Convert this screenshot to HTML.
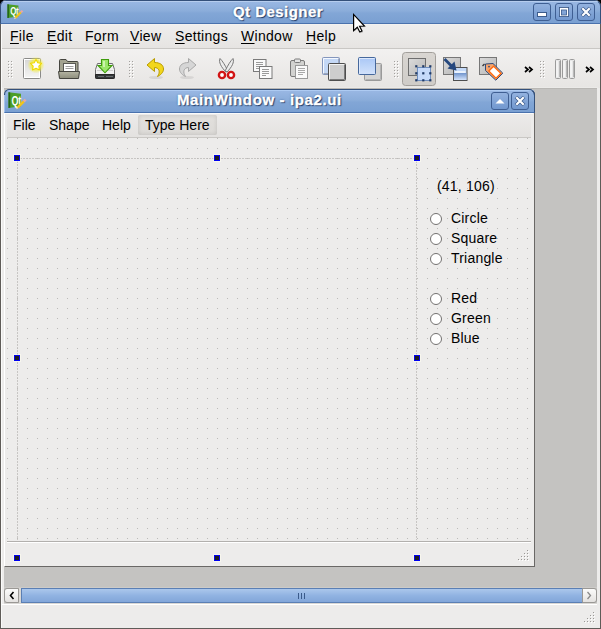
<!DOCTYPE html>
<html><head><meta charset="utf-8">
<style>
*{margin:0;padding:0;box-sizing:border-box}
html,body{width:601px;height:629px;overflow:hidden;background:#000;font-family:"Liberation Sans",sans-serif;position:relative}
.a{position:absolute}
.t{position:absolute;white-space:nowrap;color:#000;font-size:14px;line-height:14px}
.u{text-decoration:underline;text-underline-offset:2px;text-decoration-thickness:1px}
.hd{position:absolute;width:6px;height:6px;background:#1e1e22;border:1px solid #0000f0;box-shadow:0 0 0 1px rgba(255,255,240,0.55)}
.rb{position:absolute;left:430px;width:12px;height:12px;border-radius:50%;background:#fff;border:1px solid #737170}
.rt{position:absolute;left:451px;white-space:nowrap;font-size:14px;line-height:14px;color:#000;letter-spacing:0.2px}
.tbar{background:linear-gradient(#9ab8e4,#8badda 45%,#82a6d6 55%,#7aa0d2)}
.tb{border:1px solid #3f5f93;border-radius:3px;background:linear-gradient(#93b2df,#7298cf)}
.ttl{position:absolute;white-space:nowrap;font-weight:bold;color:#fff;font-size:15px;line-height:15px;text-shadow:1px 1px 1px #1c3866,0 0 2px #35578c;-webkit-text-stroke:0.3px #fff}
</style></head><body>
<!-- window frame -->
<div class="a" style="left:0;top:0;width:601px;height:629px;background:#edeceb;border-radius:6px 6px 0 0;border-left:1px solid #5f5c58;border-right:1px solid #5f5c58;border-bottom:1px solid #5f5c58"></div>
<!-- outer title bar -->
<div class="a tbar" style="left:0;top:0;width:601px;height:24px;border-radius:6px 6px 0 0;border:1px solid #34507a;border-bottom:1px solid #4a72ad"></div>
<div class="a" style="left:1px;top:1px;width:599px;height:1px;background:#b6cdee;border-radius:6px 6px 0 0;left:3px;width:595px"></div>
<div class="a" style="left:1px;top:24px;width:599px;height:1px;background:#f3f2f0"></div>
<svg class="a" style="left:7px;top:4px;transform:scale(0.88);transform-origin:0 0" width="20" height="18">
<path d="M0.5 0.3 L13 1.8 L13 14.2 L0.5 16 Z" fill="#4c9e28"/>
<path d="M0.5 0.3 L2.2 0.6 L2.2 15.6 L0.5 16 Z" fill="#226418"/>
<text x="0" y="0" transform="translate(3.6,12.6) scale(0.78,1.05)" font-family="Liberation Sans" font-size="11.5" font-weight="bold" fill="#fff" stroke="none" letter-spacing="-0.4">Qt</text>
<path d="M9.6 15.6 L15.8 9.4" stroke="#f2c41c" stroke-width="2.6"/>
<path d="M15.8 9.4 L17.6 7.6" stroke="#eaa7a2" stroke-width="2.6"/>
<path d="M8.4 16.8 L9.6 15.6" stroke="#e8d8b0" stroke-width="1.6"/>
</svg>
<div class="ttl" style="left:233px;top:4px;letter-spacing:0.45px">Qt Designer</div>
<div class="a tb" style="left:533px;top:3px;width:18px;height:18px"></div><div class="a tb" style="left:555px;top:3px;width:18px;height:18px"></div><div class="a tb" style="left:577px;top:3px;width:18px;height:18px"></div>
<svg class="a" style="left:533px;top:3px" width="18" height="18"><rect x="4.5" y="9.5" width="9" height="4" fill="#fff" stroke="#3d5c8c"/></svg>
<svg class="a" style="left:555px;top:3px" width="18" height="18"><rect x="4.5" y="4.5" width="9" height="9" fill="none" stroke="#3d5c8c"/><rect x="5.5" y="5.5" width="7" height="7" fill="none" stroke="#fff" stroke-width="1.2"/><path d="M5.5 6.2 H12.5" stroke="#fff" stroke-width="1.4"/><rect x="6.5" y="7" width="5" height="5" fill="none" stroke="#3d5c8c" stroke-width="0.8"/></svg>
<svg class="a" style="left:577px;top:3px" width="18" height="18"><path d="M5 5 L13 13 M13 5 L5 13" stroke="#3d5c8c" stroke-width="3.8"/><path d="M5.3 5.3 L12.7 12.7 M12.7 5.3 L5.3 12.7" stroke="#fff" stroke-width="2.2"/></svg>

<!-- menubar -->
<div class="a" style="left:1px;top:25px;width:599px;height:23px;background:linear-gradient(#efeeed,#e6e4e2)"></div>
<div class="a" style="left:1px;top:48px;width:599px;height:1px;background:#c9c7c4"></div>
<div class="t" style="left:10px;top:29px;letter-spacing:0.3px"><span class="u">F</span>ile</div>
<div class="t" style="left:47px;top:29px;letter-spacing:0.3px"><span class="u">E</span>dit</div>
<div class="t" style="left:85px;top:29px;letter-spacing:0.3px">F<span class="u">o</span>rm</div>
<div class="t" style="left:130px;top:29px;letter-spacing:0.3px"><span class="u">V</span>iew</div>
<div class="t" style="left:175px;top:29px;letter-spacing:0.3px"><span class="u">S</span>ettings</div>
<div class="t" style="left:241px;top:29px;letter-spacing:0.3px"><span class="u">W</span>indow</div>
<div class="t" style="left:306px;top:29px;letter-spacing:0.3px"><span class="u">H</span>elp</div>

<!-- toolbar -->
<div class="a" style="left:1px;top:49px;width:599px;height:39px;background:linear-gradient(#f2f1f0,#e7e5e3)"></div>

<!-- MDI area -->
<div class="a" style="left:2px;top:87px;width:596px;height:1px;background:#ebeae8"></div>
<div class="a" style="left:4px;top:88px;width:593px;height:515px;background:#c4c3c1;border-top:1px solid #b9b7b4"></div>

<!-- subwindow -->
<div class="a" style="left:4px;top:100px;width:531px;height:467px;background:#edeceb;border-left:1px solid #fff;border-right:1px solid #6a6866;border-bottom:1px solid #6a6866"></div>
<div class="a tbar" style="left:4px;top:89px;width:531px;height:24px;border-radius:6px 6px 0 0;border:1px solid #34507a;border-bottom-color:#4a72ad;border-left-color:#a6c3ec"></div>
<div class="a" style="left:5px;top:90px;width:529px;height:1px;background:#aecbf2;border-radius:4px 4px 0 0"></div>
<svg class="a" style="left:0;top:85px" width="16" height="16"><path d="M4.5 10 Q4.5 4.5 10 4.5" fill="none" stroke="#34507a" stroke-width="1.1"/></svg><svg class="a" style="left:524px;top:85px" width="16" height="16"><path d="M4.5 4.5 Q10.5 4.5 10.5 10.5" fill="none" stroke="#34507a" stroke-width="1.1"/></svg>
<div class="a" style="left:5px;top:113px;width:528px;height:1px;background:#fbfbfa"></div>
<svg class="a" style="left:8px;top:92px;transform:scale(1.0);transform-origin:0 0" width="20" height="18">
<path d="M0.5 0.3 L13 1.8 L13 14.2 L0.5 16 Z" fill="#4c9e28"/>
<path d="M0.5 0.3 L2.2 0.6 L2.2 15.6 L0.5 16 Z" fill="#226418"/>
<text x="0" y="0" transform="translate(3.6,12.6) scale(0.78,1.05)" font-family="Liberation Sans" font-size="11.5" font-weight="bold" fill="#fff" stroke="none" letter-spacing="-0.4">Qt</text>
<path d="M9.6 15.6 L15.8 9.4" stroke="#f2c41c" stroke-width="2.6"/>
<path d="M15.8 9.4 L17.6 7.6" stroke="#eaa7a2" stroke-width="2.6"/>
<path d="M8.4 16.8 L9.6 15.6" stroke="#e8d8b0" stroke-width="1.6"/>
</svg>
<div class="ttl" style="left:177px;top:92px;letter-spacing:0.62px">MainWindow - ipa2.ui</div>
<div class="a tb" style="left:491px;top:92px;width:18px;height:18px"></div><div class="a tb" style="left:511px;top:92px;width:18px;height:18px"></div>
<svg class="a" style="left:491px;top:92px" width="18" height="18"><path d="M4.5 11.5 L9 7 L13.5 11.5 Z" fill="#fff"/></svg>
<svg class="a" style="left:511px;top:92px" width="18" height="18"><path d="M5 5 L13 13 M13 5 L5 13" stroke="#3d5c8c" stroke-width="3.6"/><path d="M5.3 5.3 L12.7 12.7 M12.7 5.3 L5.3 12.7" stroke="#fff" stroke-width="2.2"/></svg>

<!-- sub menubar -->
<div class="a" style="left:7px;top:114px;width:524px;height:23px;background:linear-gradient(#ecebea,#e4e2e0)"></div>
<div class="a" style="left:7px;top:137px;width:524px;height:1px;background:#c9c7c4"></div>
<div class="a" style="left:138px;top:115px;width:79px;height:20px;background:linear-gradient(#e2e0dd,#dcdad7);box-shadow:inset 0 0 4px rgba(0,0,0,0.13);border-radius:2px"></div>
<div class="t" style="left:13px;top:118px">File</div>
<div class="t" style="left:49px;top:118px">Shape</div>
<div class="t" style="left:102px;top:118px">Help</div>
<div class="t" style="left:145px;top:118px">Type Here</div>

<!-- status line of subwindow -->
<div class="a" style="left:7px;top:541px;width:524px;height:1px;background:#b2b0ad"></div>
<div class="a" style="left:7px;top:542px;width:524px;height:1px;background:#fff"></div>

<svg class="a" style="left:0;top:0" width="601" height="629">
<defs>
<pattern id="grid" x="7" y="138" width="10" height="10" patternUnits="userSpaceOnUse"><rect width="1" height="1" fill="#bcbab8"/></pattern>
<linearGradient id="docg" x1="0" y1="0" x2="0" y2="1"><stop offset="0" stop-color="#d8d8d6"/><stop offset="1" stop-color="#f4f4f3"/></linearGradient>
<radialGradient id="glow"><stop offset="0.5" stop-color="#f4ee40" stop-opacity="0.9"/><stop offset="1" stop-color="#f4ee40" stop-opacity="0"/></radialGradient>
<linearGradient id="foldg" x1="0" y1="0" x2="0" y2="1"><stop offset="0" stop-color="#b4b4a2"/><stop offset="1" stop-color="#8e8e7c"/></linearGradient>
<linearGradient id="grayg" x1="0" y1="0" x2="1" y2="1"><stop offset="0" stop-color="#dcdcdc"/><stop offset="1" stop-color="#b4b4b4"/></linearGradient>
<linearGradient id="blueg" x1="0" y1="0" x2="0" y2="1"><stop offset="0" stop-color="#a9c7f6"/><stop offset="1" stop-color="#d2e2fb"/></linearGradient>
<linearGradient id="pressg" x1="0" y1="0" x2="0" y2="1"><stop offset="0" stop-color="#d9d6d2"/><stop offset="1" stop-color="#cfccc8"/></linearGradient>
</defs>
<path d="M20 158.5 H414 M17.5 161 V540 M416.5 161 V540" stroke="#c8c6c4" stroke-width="1" stroke-dasharray="2 1"/>
<rect x="7" y="138" width="521" height="401" fill="url(#grid)"/>

<rect x="9" y="62" width="1" height="1" fill="#fff"/><rect x="8" y="61" width="1" height="1" fill="#a3a19e"/>
<rect x="12" y="62" width="1" height="1" fill="#fff"/><rect x="11" y="61" width="1" height="1" fill="#a3a19e"/>
<rect x="9" y="65" width="1" height="1" fill="#fff"/><rect x="8" y="64" width="1" height="1" fill="#a3a19e"/>
<rect x="12" y="65" width="1" height="1" fill="#fff"/><rect x="11" y="64" width="1" height="1" fill="#a3a19e"/>
<rect x="9" y="68" width="1" height="1" fill="#fff"/><rect x="8" y="67" width="1" height="1" fill="#a3a19e"/>
<rect x="12" y="68" width="1" height="1" fill="#fff"/><rect x="11" y="67" width="1" height="1" fill="#a3a19e"/>
<rect x="9" y="71" width="1" height="1" fill="#fff"/><rect x="8" y="70" width="1" height="1" fill="#a3a19e"/>
<rect x="12" y="71" width="1" height="1" fill="#fff"/><rect x="11" y="70" width="1" height="1" fill="#a3a19e"/>
<rect x="9" y="74" width="1" height="1" fill="#fff"/><rect x="8" y="73" width="1" height="1" fill="#a3a19e"/>
<rect x="12" y="74" width="1" height="1" fill="#fff"/><rect x="11" y="73" width="1" height="1" fill="#a3a19e"/>
<rect x="9" y="77" width="1" height="1" fill="#fff"/><rect x="8" y="76" width="1" height="1" fill="#a3a19e"/>
<rect x="12" y="77" width="1" height="1" fill="#fff"/><rect x="11" y="76" width="1" height="1" fill="#a3a19e"/>
<rect x="130" y="62" width="1" height="1" fill="#fff"/><rect x="129" y="61" width="1" height="1" fill="#a3a19e"/>
<rect x="133" y="62" width="1" height="1" fill="#fff"/><rect x="132" y="61" width="1" height="1" fill="#a3a19e"/>
<rect x="130" y="65" width="1" height="1" fill="#fff"/><rect x="129" y="64" width="1" height="1" fill="#a3a19e"/>
<rect x="133" y="65" width="1" height="1" fill="#fff"/><rect x="132" y="64" width="1" height="1" fill="#a3a19e"/>
<rect x="130" y="68" width="1" height="1" fill="#fff"/><rect x="129" y="67" width="1" height="1" fill="#a3a19e"/>
<rect x="133" y="68" width="1" height="1" fill="#fff"/><rect x="132" y="67" width="1" height="1" fill="#a3a19e"/>
<rect x="130" y="71" width="1" height="1" fill="#fff"/><rect x="129" y="70" width="1" height="1" fill="#a3a19e"/>
<rect x="133" y="71" width="1" height="1" fill="#fff"/><rect x="132" y="70" width="1" height="1" fill="#a3a19e"/>
<rect x="130" y="74" width="1" height="1" fill="#fff"/><rect x="129" y="73" width="1" height="1" fill="#a3a19e"/>
<rect x="133" y="74" width="1" height="1" fill="#fff"/><rect x="132" y="73" width="1" height="1" fill="#a3a19e"/>
<rect x="130" y="77" width="1" height="1" fill="#fff"/><rect x="129" y="76" width="1" height="1" fill="#a3a19e"/>
<rect x="133" y="77" width="1" height="1" fill="#fff"/><rect x="132" y="76" width="1" height="1" fill="#a3a19e"/>
<rect x="395" y="62" width="1" height="1" fill="#fff"/><rect x="394" y="61" width="1" height="1" fill="#a3a19e"/>
<rect x="398" y="62" width="1" height="1" fill="#fff"/><rect x="397" y="61" width="1" height="1" fill="#a3a19e"/>
<rect x="395" y="65" width="1" height="1" fill="#fff"/><rect x="394" y="64" width="1" height="1" fill="#a3a19e"/>
<rect x="398" y="65" width="1" height="1" fill="#fff"/><rect x="397" y="64" width="1" height="1" fill="#a3a19e"/>
<rect x="395" y="68" width="1" height="1" fill="#fff"/><rect x="394" y="67" width="1" height="1" fill="#a3a19e"/>
<rect x="398" y="68" width="1" height="1" fill="#fff"/><rect x="397" y="67" width="1" height="1" fill="#a3a19e"/>
<rect x="395" y="71" width="1" height="1" fill="#fff"/><rect x="394" y="70" width="1" height="1" fill="#a3a19e"/>
<rect x="398" y="71" width="1" height="1" fill="#fff"/><rect x="397" y="70" width="1" height="1" fill="#a3a19e"/>
<rect x="395" y="74" width="1" height="1" fill="#fff"/><rect x="394" y="73" width="1" height="1" fill="#a3a19e"/>
<rect x="398" y="74" width="1" height="1" fill="#fff"/><rect x="397" y="73" width="1" height="1" fill="#a3a19e"/>
<rect x="395" y="77" width="1" height="1" fill="#fff"/><rect x="394" y="76" width="1" height="1" fill="#a3a19e"/>
<rect x="398" y="77" width="1" height="1" fill="#fff"/><rect x="397" y="76" width="1" height="1" fill="#a3a19e"/>
<rect x="541" y="62" width="1" height="1" fill="#fff"/><rect x="540" y="61" width="1" height="1" fill="#a3a19e"/>
<rect x="544" y="62" width="1" height="1" fill="#fff"/><rect x="543" y="61" width="1" height="1" fill="#a3a19e"/>
<rect x="541" y="65" width="1" height="1" fill="#fff"/><rect x="540" y="64" width="1" height="1" fill="#a3a19e"/>
<rect x="544" y="65" width="1" height="1" fill="#fff"/><rect x="543" y="64" width="1" height="1" fill="#a3a19e"/>
<rect x="541" y="68" width="1" height="1" fill="#fff"/><rect x="540" y="67" width="1" height="1" fill="#a3a19e"/>
<rect x="544" y="68" width="1" height="1" fill="#fff"/><rect x="543" y="67" width="1" height="1" fill="#a3a19e"/>
<rect x="541" y="71" width="1" height="1" fill="#fff"/><rect x="540" y="70" width="1" height="1" fill="#a3a19e"/>
<rect x="544" y="71" width="1" height="1" fill="#fff"/><rect x="543" y="70" width="1" height="1" fill="#a3a19e"/>
<rect x="541" y="74" width="1" height="1" fill="#fff"/><rect x="540" y="73" width="1" height="1" fill="#a3a19e"/>
<rect x="544" y="74" width="1" height="1" fill="#fff"/><rect x="543" y="73" width="1" height="1" fill="#a3a19e"/>
<rect x="541" y="77" width="1" height="1" fill="#fff"/><rect x="540" y="76" width="1" height="1" fill="#a3a19e"/>
<rect x="544" y="77" width="1" height="1" fill="#fff"/><rect x="543" y="76" width="1" height="1" fill="#a3a19e"/>
<rect x="23.5" y="58.5" width="17" height="20" rx="1" fill="#fff" stroke="#8a8a88"/>
<rect x="25" y="60" width="14" height="17" fill="url(#docg)"/>
<circle cx="36" cy="65" r="8.5" fill="url(#glow)"/>
<polygon points="36.00,59.40 37.76,62.77 41.52,63.41 38.85,66.13 39.41,69.89 36.00,68.20 32.59,69.89 33.15,66.13 30.48,63.41 34.24,62.77" fill="#fff" stroke="#f0d800" stroke-width="1.1" stroke-linejoin="round"/>
<path d="M59.5 77.5 V60.5 Q59.5 59.5 60.5 59.5 H66 L67.5 61.5 H77 Q78 61.5 78 62.5 V77.5 Z" fill="#a2a290" stroke="#45453f"/>
<rect x="63.5" y="63.5" width="12" height="9" fill="#fff" stroke="#5a5a55"/>
<path d="M65.5 66.5 H73.5 M65.5 68.5 H73.5" stroke="#a0a0a0"/>
<path d="M58.5 71.5 H79.5 L78.5 78.5 H59.5 Z" fill="url(#foldg)" stroke="#45453f"/>
<path d="M97.5 63.5 H112.5 L114.5 69.5 V77.5 Q114.5 78.5 113.5 78.5 H96.5 Q95.5 78.5 95.5 77.5 V69.5 Z" fill="#f0f0f0" stroke="#6e6e6e"/><path d="M97 70.5 H113" stroke="#d0d0d0"/>
<path d="M95.5 74.5 H114.5 V77.5 Q114.5 78.5 113.5 78.5 H96.5 Q95.5 78.5 95.5 77.5 Z" fill="#34383a" stroke="#262626"/>
<path d="M98 76.5 H104 M106 76.5 H113" stroke="#6a6e70" stroke-width="1"/>
<path d="M101.5 59.5 H108.5 V65.5 H112 L105 72.8 L98 65.5 H101.5 Z" fill="#9be66a" stroke="#3f9c0c" stroke-width="1.1"/><path d="M104 61 V67" stroke="#d8f8c0" stroke-width="1.6"/>
<ellipse cx="156" cy="77.5" rx="7" ry="1.6" fill="#000" opacity="0.08"/>
<path d="M147 65 L154.5 58.5 V62.5 C160 62.5 163.5 65 163.5 69 C163.5 72.5 160.5 75 157.5 76.5 C159 74 159.5 72.5 159 70.5 C158.5 68.5 156.5 67.5 154.5 67.5 V71.5 Z" fill="#f2d61c" stroke="#b89c00" stroke-linejoin="round"/>
<ellipse cx="187" cy="77.5" rx="7" ry="1.6" fill="#000" opacity="0.08"/>
<path d="M147 65 L154.5 58.5 V62.5 C160 62.5 163.5 65 163.5 69 C163.5 72.5 160.5 75 157.5 76.5 C159 74 159.5 72.5 159 70.5 C158.5 68.5 156.5 67.5 154.5 67.5 V71.5 Z" transform="translate(343,0) scale(-1,1)" fill="#d6d6d6" stroke="#a8a8a8" stroke-linejoin="round"/>
<path d="M220 58.5 C218.5 62 221 67 226 72 L227.8 70.8 C225 65 222.5 61 220 58.5Z" fill="#ececec" stroke="#777"/>
<path d="M220 58.5 C218.5 62 221 67 226 72 L227.8 70.8 C225 65 222.5 61 220 58.5Z" transform="translate(453,0) scale(-1,1)" fill="#ececec" stroke="#777"/>
<circle cx="222" cy="75" r="3.1" fill="#fff" stroke="#d21414" stroke-width="2.4"/>
<circle cx="231" cy="75" r="3.1" fill="#fff" stroke="#d21414" stroke-width="2.4"/>
<rect x="253.5" y="59.5" width="12.5" height="12" fill="#fafafa" stroke="#7a7a7a"/>
<path d="M256.0 62.5 H263.0 M256.0 64.5 H263.0 M256.0 66.5 H263.0 M256.0 68.5 H260.0" stroke="#9a9a9a"/>
<rect x="259.5" y="66.5" width="12.5" height="12" fill="#fafafa" stroke="#7a7a7a"/>
<path d="M262.0 69.5 H269.0 M262.0 71.5 H269.0 M262.0 73.5 H269.0 M262.0 75.5 H266.0" stroke="#9a9a9a"/>
<rect x="290.5" y="60.5" width="14" height="16" rx="1.5" fill="#d2d2d0" stroke="#7a7a7a"/>
<rect x="294.5" y="59" width="6" height="3.5" rx="1" fill="#e4e4e4" stroke="#7a7a7a"/>
<rect x="295.5" y="65.5" width="12" height="13" fill="#fafafa" stroke="#9a9a9a"/>
<path d="M298 68.5 H305 M298 70.5 H305 M298 72.5 H305 M298 74.5 H303" stroke="#a8a8a8"/>
<rect x="322.5" y="57.5" width="17" height="17" rx="1" fill="#c4d8f6" stroke="#8496bc"/><path d="M323.5 73.5 V58.5 H338.5" fill="none" stroke="#f4f8ff"/><path d="M338.5 58.5 V73.5 H323.5" fill="none" stroke="#9fa8ba"/><rect x="328.5" y="63.5" width="17" height="17" rx="1" fill="#cdcdcd" stroke="#4e4e4e"/><path d="M329.5 79.5 V64.5 H344.5" fill="none" stroke="#f2f2f2"/><path d="M344.5 64.5 V79.5 H329.5" fill="none" stroke="#7a7a7a"/>
<rect x="364.5" y="63.5" width="17" height="17" rx="1" fill="#d4d4d4" stroke="#9a9a9a"/><path d="M380.5 64.5 V79.5 H365.5" fill="none" stroke="#b4b4b4"/><rect x="358.5" y="57.5" width="17" height="17" rx="1" fill="url(#blueg)" stroke="#46689c"/><path d="M359.5 73.5 V58.5 H374.5" fill="none" stroke="#dce8fc"/>
<rect x="402.5" y="52.5" width="33" height="33" rx="3" fill="url(#pressg)" stroke="#a29f9b"/>
<rect x="408.5" y="58.5" width="17" height="17" fill="url(#grayg)" stroke="#6e6e6e"/>
<rect x="417.5" y="67.5" width="13" height="13" fill="#c6dafa" stroke="#6f8fc0"/>
<rect x="415.2" y="65.2" width="2.2" height="2.2" fill="#203a66"/>
<rect x="422.2" y="65.2" width="2.2" height="2.2" fill="#203a66"/>
<rect x="429.2" y="65.2" width="2.2" height="2.2" fill="#203a66"/>
<rect x="415.2" y="72.2" width="2.2" height="2.2" fill="#203a66"/>
<rect x="429.2" y="72.2" width="2.2" height="2.2" fill="#203a66"/>
<rect x="415.2" y="79.2" width="2.2" height="2.2" fill="#203a66"/>
<rect x="422.2" y="79.2" width="2.2" height="2.2" fill="#203a66"/>
<rect x="429.2" y="79.2" width="2.2" height="2.2" fill="#203a66"/>
<rect x="422.2" y="72.2" width="2.2" height="2.2" fill="#203a66"/>
<rect x="443.5" y="57.5" width="17" height="17" fill="url(#grayg)" stroke="#777"/>
<defs><linearGradient id="bdg" x1="0" y1="0" x2="0" y2="1"><stop offset="0" stop-color="#6f93cc"/><stop offset="1" stop-color="#d4e4fc"/></linearGradient></defs><rect x="453.5" y="67.5" width="13.5" height="13" fill="#c4daf9" stroke="#4e4e4e"/><rect x="454" y="73" width="12.5" height="7" fill="url(#bdg)"/><path d="M455 72 H465.5" stroke="#fff" stroke-width="1.3"/><path d="M444.5 59 L452.5 67" stroke="#24477e" stroke-width="2.8"/><path d="M447.5 68.5 L456.5 70.5 L454.5 61.5 Z" fill="#24477e"/>
<rect x="479.5" y="57.5" width="17" height="17" fill="url(#grayg)" stroke="#777"/>
<path d="M482.5 66 L484.5 64" stroke="#333" stroke-width="1.2"/><path d="M485.5 64 L493 63.5 L502.8 73.2 L495.8 80.2 L485.5 70.5 Z" fill="#f6a46c" stroke="#2f4a7a" stroke-linejoin="round"/><path d="M488.8 71 L493.6 66.2 L500.8 73.4 L496 78.2 Z" fill="#fff" stroke="#ff6a10" stroke-width="1.3"/><circle cx="489" cy="66.6" r="0.9" fill="#2f4a7a"/>
<path d="M525 67 L528 69.5 L525 72 M529 67 L532 69.5 L529 72" fill="none" stroke="#000" stroke-width="1.7"/>
<path d="M586 67 L589 69.5 L586 72 M590 67 L593 69.5 L590 72" fill="none" stroke="#000" stroke-width="1.7"/>
<rect x="555.5" y="59.5" width="5" height="19" rx="1" fill="#e6e6e6" stroke="#9a9a9a"/>
<path d="M557.0 61 V77" stroke="#fff"/>
<path d="M559.5 61 V77" stroke="#b8b8b8"/>
<rect x="562.5" y="59.5" width="5" height="19" rx="1" fill="#e6e6e6" stroke="#9a9a9a"/>
<path d="M564.0 61 V77" stroke="#fff"/>
<path d="M566.5 61 V77" stroke="#b8b8b8"/>
<rect x="569.5" y="59.5" width="5" height="19" rx="1" fill="#e6e6e6" stroke="#9a9a9a"/>
<path d="M571.0 61 V77" stroke="#fff"/>
<path d="M573.5 61 V77" stroke="#b8b8b8"/>
</svg>

<!-- radios -->
<div class="t" style="left:437px;top:179px;letter-spacing:0.2px">(41, 106)</div>
<div class="rb" style="top:213px"></div><div class="rt" style="top:211px">Circle</div>
<div class="rb" style="top:233px"></div><div class="rt" style="top:231px">Square</div>
<div class="rb" style="top:253px"></div><div class="rt" style="top:251px">Triangle</div>
<div class="rb" style="top:293px"></div><div class="rt" style="top:291px">Red</div>
<div class="rb" style="top:313px"></div><div class="rt" style="top:311px">Green</div>
<div class="rb" style="top:333px"></div><div class="rt" style="top:331px">Blue</div>

<!-- handles -->
<div class="hd" style="left:14px;top:155px"></div>
<div class="hd" style="left:214px;top:155px"></div>
<div class="hd" style="left:414px;top:155px"></div>
<div class="hd" style="left:14px;top:355px"></div>
<div class="hd" style="left:414px;top:355px"></div>
<div class="hd" style="left:14px;top:555px"></div>
<div class="hd" style="left:214px;top:555px"></div>
<div class="hd" style="left:414px;top:555px"></div>

<!-- scrollbar -->
<div class="a" style="left:19px;top:588px;width:564px;height:15px;background:#d9d7d4"></div>
<div class="a" style="left:4px;top:588px;width:15px;height:15px;background:linear-gradient(#fbfbfa,#e4e2e0);border:1px solid #9a9895;border-radius:3px 0 0 3px"></div>
<svg class="a" style="left:4px;top:588px" width="15" height="15"><path d="M9.5 4 L6.5 7.5 L9.5 11" fill="none" stroke="#000" stroke-width="1.6"/></svg>
<div class="a" style="left:21px;top:588px;width:562px;height:15px;background:linear-gradient(#abc7ec,#91b3e2 50%,#82a6d9);border:1px solid #5b7fb4"></div>
<div class="a" style="left:298px;top:593px;width:1px;height:6px;background:#3a5a8a"></div>
<div class="a" style="left:301px;top:593px;width:1px;height:6px;background:#3a5a8a"></div>
<div class="a" style="left:304px;top:593px;width:1px;height:6px;background:#3a5a8a"></div>
<div class="a" style="left:582px;top:588px;width:15px;height:15px;background:linear-gradient(#fbfbfa,#e4e2e0);border:1px solid #9a9895;border-radius:0 3px 3px 0"></div>
<svg class="a" style="left:582px;top:588px" width="15" height="15"><path d="M5.5 4 L8.5 7.5 L5.5 11" fill="none" stroke="#8a8a8a" stroke-width="1.3"/></svg>

<!-- status -->
<div class="a" style="left:1px;top:25px;width:1px;height:603px;background:#fafaf9"></div>
<div class="a" style="left:4px;top:603px;width:593px;height:1px;background:#d9d7d4"></div><div class="a" style="left:4px;top:587px;width:593px;height:1px;background:#cdcbc8"></div>
<div class="a" style="left:2px;top:604px;width:595px;height:1px;background:#fff"></div>
<svg class="a" style="left:0;top:0" width="601" height="629">
<rect x="528" y="551" width="1" height="1" fill="#fff"/><rect x="527" y="550" width="1" height="1" fill="#9a9895"/><rect x="528" y="554" width="1" height="1" fill="#fff"/><rect x="527" y="553" width="1" height="1" fill="#9a9895"/><rect x="525" y="554" width="1" height="1" fill="#fff"/><rect x="524" y="553" width="1" height="1" fill="#9a9895"/><rect x="528" y="557" width="1" height="1" fill="#fff"/><rect x="527" y="556" width="1" height="1" fill="#9a9895"/><rect x="525" y="557" width="1" height="1" fill="#fff"/><rect x="524" y="556" width="1" height="1" fill="#9a9895"/><rect x="522" y="557" width="1" height="1" fill="#fff"/><rect x="521" y="556" width="1" height="1" fill="#9a9895"/><rect x="528" y="560" width="1" height="1" fill="#fff"/><rect x="527" y="559" width="1" height="1" fill="#9a9895"/><rect x="525" y="560" width="1" height="1" fill="#fff"/><rect x="524" y="559" width="1" height="1" fill="#9a9895"/><rect x="522" y="560" width="1" height="1" fill="#fff"/><rect x="521" y="559" width="1" height="1" fill="#9a9895"/><rect x="519" y="560" width="1" height="1" fill="#fff"/><rect x="518" y="559" width="1" height="1" fill="#9a9895"/><rect x="594" y="613" width="1" height="1" fill="#fff"/><rect x="593" y="612" width="1" height="1" fill="#9a9895"/><rect x="594" y="616" width="1" height="1" fill="#fff"/><rect x="593" y="615" width="1" height="1" fill="#9a9895"/><rect x="591" y="616" width="1" height="1" fill="#fff"/><rect x="590" y="615" width="1" height="1" fill="#9a9895"/><rect x="594" y="619" width="1" height="1" fill="#fff"/><rect x="593" y="618" width="1" height="1" fill="#9a9895"/><rect x="591" y="619" width="1" height="1" fill="#fff"/><rect x="590" y="618" width="1" height="1" fill="#9a9895"/><rect x="588" y="619" width="1" height="1" fill="#fff"/><rect x="587" y="618" width="1" height="1" fill="#9a9895"/><rect x="594" y="622" width="1" height="1" fill="#fff"/><rect x="593" y="621" width="1" height="1" fill="#9a9895"/><rect x="591" y="622" width="1" height="1" fill="#fff"/><rect x="590" y="621" width="1" height="1" fill="#9a9895"/><rect x="588" y="622" width="1" height="1" fill="#fff"/><rect x="587" y="621" width="1" height="1" fill="#9a9895"/><rect x="585" y="622" width="1" height="1" fill="#fff"/><rect x="584" y="621" width="1" height="1" fill="#9a9895"/>
<path d="M354.6 15.2 V31.6 L358.3 28.2 L360.8 33.2 L363 32.2 L360.6 27.2 L365.6 27 Z" fill="#000" opacity="0.18"/><path d="M353.6 14.4 V30.6 L357.3 27.2 L359.8 32 L362 31 L359.6 26.2 L364.4 26 Z" fill="#fff" stroke="#000" stroke-width="1.2" stroke-linejoin="miter"/>
</svg>
</body></html>
